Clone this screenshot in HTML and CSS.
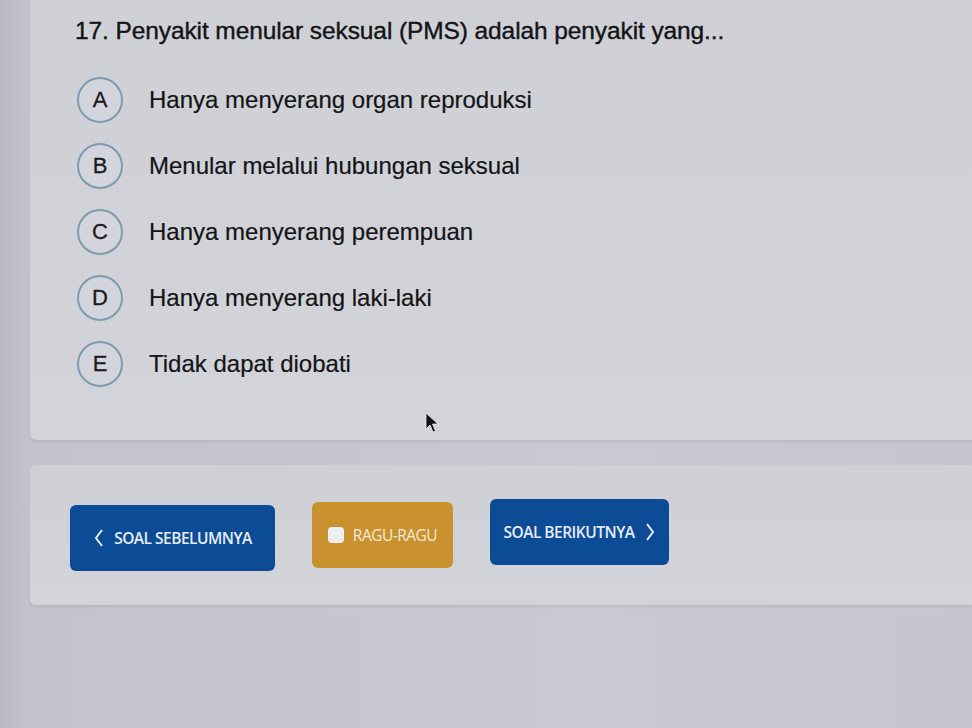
FILE: index.html
```html
<!DOCTYPE html>
<html>
<head>
<meta charset="utf-8">
<link rel="stylesheet" href="styles.css">
</head>
<body>
<div class="page">
  <section class="card question-card">
    <h1 class="question">17. Penyakit menular seksual (PMS) adalah penyakit yang...</h1>
    <ul class="options">
      <li class="option"><span class="letter">A</span><span class="text">Hanya menyerang organ reproduksi</span></li>
      <li class="option"><span class="letter">B</span><span class="text">Menular melalui hubungan seksual</span></li>
      <li class="option"><span class="letter">C</span><span class="text">Hanya menyerang perempuan</span></li>
      <li class="option"><span class="letter">D</span><span class="text">Hanya menyerang laki-laki</span></li>
      <li class="option"><span class="letter">E</span><span class="text">Tidak dapat diobati</span></li>
    </ul>
    <svg class="cursor" width="16" height="22" viewBox="0 0 16 22"><path d="M1 1 L1 17 L5 13 L8 20 L10.5 19 L7.5 12 L13 12 Z" fill="#111" stroke="#eee" stroke-width="0.8"/></svg>
  </section>
  <section class="card nav-card">
    <button class="btn btn-blue btn-prev"><svg class="chev" width="12" height="20" viewBox="0 0 12 20"><path d="M9 2 L3 10 L9 18" fill="none" stroke="#e8ecf4" stroke-width="2"/></svg>SOAL SEBELUMNYA</button>
    <button class="btn btn-orange"><span class="box"></span>RAGU-RAGU</button>
    <button class="btn btn-blue btn-next">SOAL BERIKUTNYA<svg class="chev" width="12" height="20" viewBox="0 0 12 20"><path d="M3 2 L9 10 L3 18" fill="none" stroke="#e8ecf4" stroke-width="2"/></svg></button>
  </section>
</div>
</body>
</html>
```

FILE: styles.css
```css
html, body {
  margin: 0;
  padding: 0;
}
body {
  width: 972px;
  height: 728px;
  overflow: hidden;
  background: linear-gradient(90deg, #b8b9c1 0, #c3c4cb 30px, #c9cad1 60%, #c6c7ce 100%);
  font-family: "Liberation Sans", Arial, sans-serif;
}
.page {
  padding-left: 30px;
}
.card {
  background: linear-gradient(180deg, #cfd0d6 0%, #d3d4da 100%);
  border-radius: 0 0 0 6px;
}
.question-card {
  position: relative;
  height: 440px;
  box-sizing: border-box;
  padding: 17px 0 0 45px;
  box-shadow: 0 2px 3px rgba(0,0,0,0.08);
}
.question {
  margin: 0;
  font-size: 24.5px;
  font-weight: normal;
  color: #141416;
  letter-spacing: -0.1px;
  -webkit-text-stroke: 0.4px #141416;
}
.options {
  list-style: none;
  margin: 32px 0 0 2px;
  padding: 0;
  display: flex;
  flex-direction: column;
  gap: 20px;
}
.option {
  display: flex;
  align-items: center;
  gap: 26px;
  height: 46px;
}
.letter {
  width: 42px;
  height: 42px;
  border: 2px solid #7d9bb0;
  border-radius: 50%;
  display: flex;
  align-items: center;
  justify-content: center;
  font-size: 22px;
  color: #1a1a1e;
  background: #d4d5dc;
  flex: none;
  -webkit-text-stroke: 0.3px #1a1a1e;
}
.text {
  font-size: 24px;
  color: #141416;
  -webkit-text-stroke: 0.2px #141416;
}
.cursor {
  position: absolute;
  left: 395px;
  top: 412px;
}
.nav-card {
  margin-top: 25px;
  height: 140px;
  border-radius: 6px 0 0 6px;
  display: flex;
  align-items: center;
  padding-left: 40px;
  gap: 37px;
  box-shadow: 0 2px 3px rgba(0,0,0,0.08);
}
.btn {
  border: none;
  border-radius: 6px;
  height: 66px;
  display: flex;
  align-items: center;
  justify-content: center;
  gap: 9px;
  font-family: "Open Sans", "Noto Sans", sans-serif;
  font-size: 15.5px;
  font-weight: 600;
  color: #e9edf5;
  letter-spacing: -0.5px;
  padding: 0;
}
.btn-blue {
  background: #0c4b96;
}
.btn-prev {
  width: 205px;
  margin-top: 6px;
}
.btn-next {
  width: 179px;
  margin-top: -6px;
}
.btn-orange {
  width: 141px;
  background: #c9922f;
  font-weight: 400;
  color: #f1ead9;
}
.box {
  width: 16px;
  height: 16px;
  background: #eeeef0;
  border-radius: 4px;
}
```
